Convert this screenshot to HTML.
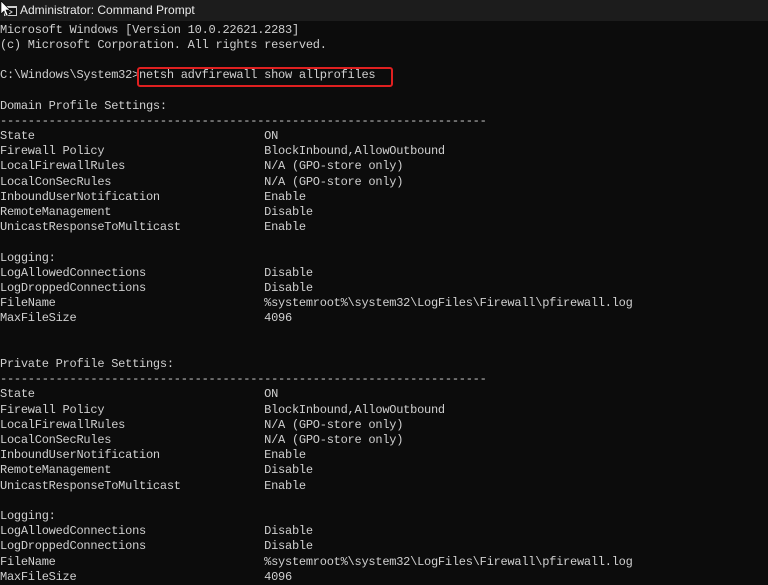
<!DOCTYPE html>
<html><head><meta charset="utf-8"><style>
html,body{margin:0;padding:0;background:#0c0c0c;width:768px;height:582px;overflow:hidden}
#title{position:absolute;left:0;top:0;width:768px;height:21px;background:#1c1c1c;}
#title span{position:absolute;left:20px;top:3px;font:12px "Liberation Sans",sans-serif;color:#ececec}
pre{position:absolute;left:0;top:22.5px;margin:0;font:12px/15.2px "Liberation Mono",monospace;letter-spacing:-0.25px;color:#d0d0d0}
#box{position:absolute;left:137px;top:67px;width:252px;height:16px;border:2px solid #e02020;border-radius:3px}
</style></head><body>
<div id="title">
<svg width="18" height="20" style="position:absolute;left:0;top:0">
<rect x="4" y="6" width="13" height="10" fill="#cfcfcf"/>
<rect x="5" y="8" width="11" height="7" fill="#111"/>
<path d="M9 10 l3 2 l-3 2" stroke="#ddd" fill="none"/>
<path d="M1 1 L1 14 L4 11 L6 16 L8 15 L6 10 L10 10 Z" fill="#fff" stroke="#000" stroke-width="0.6"/>
</svg>
<span>Administrator: Command Prompt</span></div>
<pre>Microsoft Windows [Version 10.0.22621.2283]
(c) Microsoft Corporation. All rights reserved.

C:\Windows\System32&gt;netsh advfirewall show allprofiles

Domain Profile Settings:
----------------------------------------------------------------------
State                                 ON
Firewall Policy                       BlockInbound,AllowOutbound
LocalFirewallRules                    N/A (GPO-store only)
LocalConSecRules                      N/A (GPO-store only)
InboundUserNotification               Enable
RemoteManagement                      Disable
UnicastResponseToMulticast            Enable

Logging:
LogAllowedConnections                 Disable
LogDroppedConnections                 Disable
FileName                              %systemroot%\system32\LogFiles\Firewall\pfirewall.log
MaxFileSize                           4096


Private Profile Settings:
----------------------------------------------------------------------
State                                 ON
Firewall Policy                       BlockInbound,AllowOutbound
LocalFirewallRules                    N/A (GPO-store only)
LocalConSecRules                      N/A (GPO-store only)
InboundUserNotification               Enable
RemoteManagement                      Disable
UnicastResponseToMulticast            Enable

Logging:
LogAllowedConnections                 Disable
LogDroppedConnections                 Disable
FileName                              %systemroot%\system32\LogFiles\Firewall\pfirewall.log
MaxFileSize                           4096</pre>
<div id="box"></div>
</body></html>
